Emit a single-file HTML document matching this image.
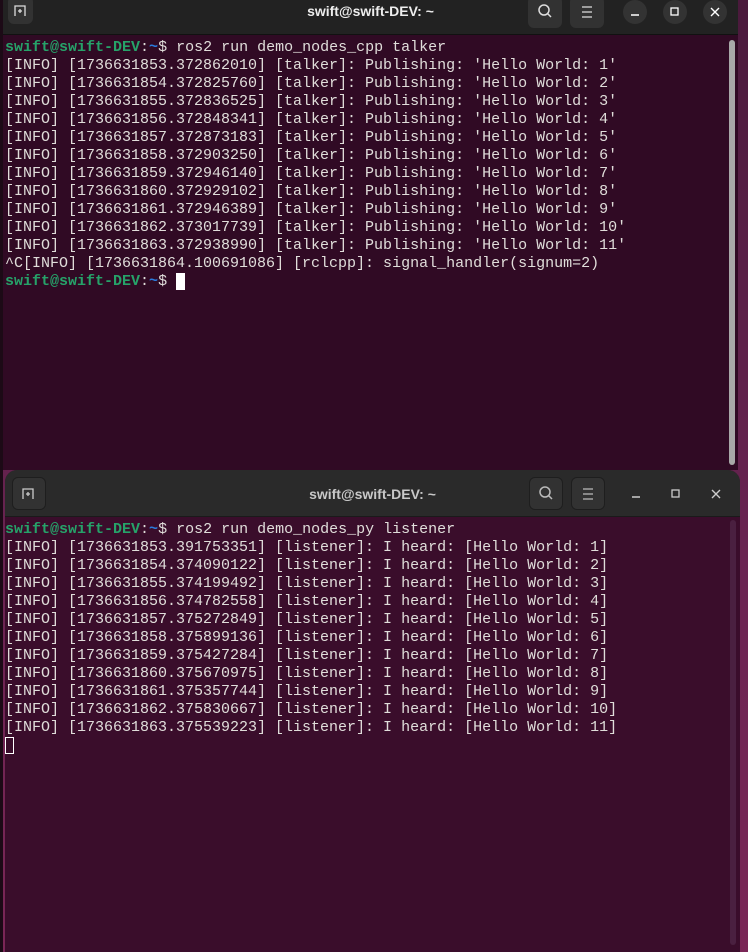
<!DOCTYPE html>
<html><head><meta charset="utf-8"><style>
*{margin:0;padding:0;box-sizing:border-box}
body{width:748px;height:952px;overflow:hidden;background:linear-gradient(180deg,#4a1a3c 0%,#6a2452 60%,#7a2656 100%);position:relative;font-family:"Liberation Mono",monospace}
.win{position:absolute;overflow:hidden}
.tb{position:absolute;left:0;right:0;top:0;background:#222}
.title{position:absolute;left:0;right:0;text-align:center;font-family:"Liberation Sans",sans-serif;font-weight:bold;font-size:14px;color:#eee}
.btn{position:absolute;background:#323232;border-radius:6px}
.circ{position:absolute;width:24px;height:24px;border-radius:12px;background:#333}
.term{position:absolute;left:0;right:0;bottom:0;font-size:15px;line-height:18px;color:#e0ddda;white-space:pre;padding-left:2px}
.g{color:#26a269;font-weight:bold}.b{color:#2a7bde;font-weight:bold}
.sb{position:absolute;width:6px;border-radius:3px}
svg{position:absolute}
</style></head><body>
<div style="position:absolute;left:0;top:0;width:3px;height:952px;background:#1c0a16"></div>
<div class="win" style="left:3px;top:0;width:735px;height:470px;background:#300a24">
 <div class="tb" style="height:35px;border-bottom:1px solid #111">
  <div class="btn" style="left:5px;top:-4px;width:25px;height:28px"></div>
  <svg style="left:11px;top:4px" width="14" height="14" viewBox="0 0 14 14"><path d="M1 12V2h10v10M4 7h4M6 5v4" stroke="#ddd" stroke-width="1.3" fill="none"/></svg>
  <div class="title" style="top:3px">swift@swift-DEV: ~</div>
  <div class="btn" style="left:525px;top:-4px;width:34px;height:32px"></div>
  <svg style="left:534px;top:3px" width="16" height="16" viewBox="0 0 16 16"><circle cx="7" cy="7" r="5" stroke="#ddd" stroke-width="1.5" fill="none"/><path d="M10.5 10.5L14 14" stroke="#ddd" stroke-width="1.5"/></svg>
  <div class="btn" style="left:567px;top:-4px;width:34px;height:32px"></div>
  <svg style="left:577px;top:5px" width="14" height="14" viewBox="0 0 14 14"><path d="M2 2h10M2 7h10M2 12h10" stroke="#ddd" stroke-width="1.3"/></svg>
  <div class="circ" style="left:620px;top:0"></div>
  <svg style="left:627px;top:7px" width="10" height="10"><path d="M1 8h8" stroke="#fff" stroke-width="1.5"/></svg>
  <div class="circ" style="left:660px;top:0"></div>
  <svg style="left:667px;top:7px" width="10" height="10"><rect x="1" y="1" width="7" height="7" stroke="#fff" stroke-width="1.3" fill="none"/></svg>
  <div class="circ" style="left:700px;top:0"></div>
  <svg style="left:707px;top:7px" width="10" height="10"><path d="M1 1l8 8M9 1l-8 8" stroke="#fff" stroke-width="1.4"/></svg>
 </div>
 <div class="term" style="top:39px"><span class="g">swift@swift-DEV</span>:<span class="b">~</span>$ ros2 run demo_nodes_cpp talker
[INFO] [1736631853.372862010] [talker]: Publishing: 'Hello World: 1'
[INFO] [1736631854.372825760] [talker]: Publishing: 'Hello World: 2'
[INFO] [1736631855.372836525] [talker]: Publishing: 'Hello World: 3'
[INFO] [1736631856.372848341] [talker]: Publishing: 'Hello World: 4'
[INFO] [1736631857.372873183] [talker]: Publishing: 'Hello World: 5'
[INFO] [1736631858.372903250] [talker]: Publishing: 'Hello World: 6'
[INFO] [1736631859.372946140] [talker]: Publishing: 'Hello World: 7'
[INFO] [1736631860.372929102] [talker]: Publishing: 'Hello World: 8'
[INFO] [1736631861.372946389] [talker]: Publishing: 'Hello World: 9'
[INFO] [1736631862.373017739] [talker]: Publishing: 'Hello World: 10'
[INFO] [1736631863.372938990] [talker]: Publishing: 'Hello World: 11'
^C[INFO] [1736631864.100691086] [rclcpp]: signal_handler(signum=2)
<span class="g">swift@swift-DEV</span>:<span class="b">~</span>$ <span style="background:#fff">&nbsp;</span></div>
 <div class="sb" style="left:726px;top:40px;height:425px;background:#a8a8a8"></div>
</div>
<div class="win" style="left:5px;top:470px;width:735px;height:482px;background:#3a0d2b;border-radius:12px 12px 0 0">
 <div class="tb" style="height:47px;background:#2a2a2a;border-bottom:1px solid #1a1a1a">
  <div class="btn" style="left:7px;top:7px;width:34px;height:33px;border:1px solid #1e1e1e"></div>
  <svg style="left:17px;top:17px" width="14" height="14" viewBox="0 0 14 14"><path d="M1 12V2h10v10M4 7h4M6 5v4" stroke="#ccc" stroke-width="1.3" fill="none"/></svg>
  <div class="title" style="top:16px;color:#c8c8c8">swift@swift-DEV: ~</div>
  <div class="btn" style="left:524px;top:7px;width:34px;height:33px;border:1px solid #1e1e1e"></div>
  <svg style="left:533px;top:15px" width="16" height="16" viewBox="0 0 16 16"><circle cx="7" cy="7" r="5" stroke="#bbb" stroke-width="1.5" fill="none"/><path d="M10.5 10.5L14 14" stroke="#bbb" stroke-width="1.5"/></svg>
  <div class="btn" style="left:566px;top:7px;width:34px;height:33px;border:1px solid #1e1e1e"></div>
  <svg style="left:576px;top:17px" width="14" height="14" viewBox="0 0 14 14"><path d="M2 2h10M2 7h10M2 12h10" stroke="#bbb" stroke-width="1.3"/></svg>
  <svg style="left:626px;top:19px" width="10" height="10"><path d="M1 8h8" stroke="#ccc" stroke-width="1.5"/></svg>
  <svg style="left:666px;top:19px" width="10" height="10"><rect x="1" y="1" width="7" height="7" stroke="#ccc" stroke-width="1.3" fill="none"/></svg>
  <svg style="left:706px;top:19px" width="10" height="10"><path d="M1 1l8 8M9 1l-8 8" stroke="#ccc" stroke-width="1.4"/></svg>
 </div>
 <div class="term" style="top:51px;padding-left:0"><span class="g">swift@swift-DEV</span>:<span class="b">~</span>$ ros2 run demo_nodes_py listener
[INFO] [1736631853.391753351] [listener]: I heard: [Hello World: 1]
[INFO] [1736631854.374090122] [listener]: I heard: [Hello World: 2]
[INFO] [1736631855.374199492] [listener]: I heard: [Hello World: 3]
[INFO] [1736631856.374782558] [listener]: I heard: [Hello World: 4]
[INFO] [1736631857.375272849] [listener]: I heard: [Hello World: 5]
[INFO] [1736631858.375899136] [listener]: I heard: [Hello World: 6]
[INFO] [1736631859.375427284] [listener]: I heard: [Hello World: 7]
[INFO] [1736631860.375670975] [listener]: I heard: [Hello World: 8]
[INFO] [1736631861.375357744] [listener]: I heard: [Hello World: 9]
[INFO] [1736631862.375830667] [listener]: I heard: [Hello World: 10]
[INFO] [1736631863.375539223] [listener]: I heard: [Hello World: 11]
<span style="outline:1px solid #fff;outline-offset:-1px">&nbsp;</span></div>
 <div class="sb" style="left:725px;top:50px;height:425px;background:#4a2040"></div>
</div>
</body></html>
